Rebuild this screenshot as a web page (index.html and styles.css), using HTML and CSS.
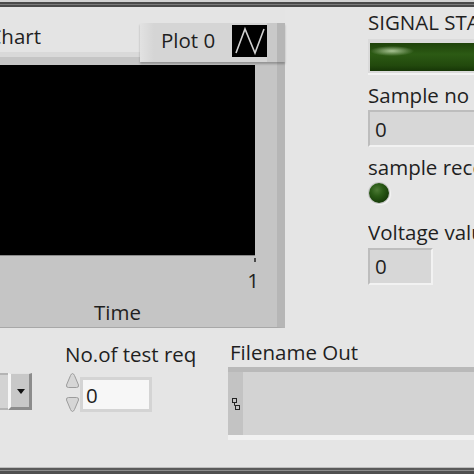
FILE: index.html
```html
<!DOCTYPE html>
<html lang="en">
<head>
  <meta charset="UTF-8" />
  <meta name="viewport" content="width=device-width, initial-scale=1.0"/>
  <title>Front Panel</title>
  <link rel="stylesheet" href="styles.css">
</head>
<body>
  <div class="panel">
    <div class="edge top-edge"></div>

    <div class="upper">
      <div class="chart">
        <div class="chart-head">
          <div class="chart-label"><span>Waveform Chart</span></div>
          <div class="legend">
            <span class="legend-name">Plot 0</span>
            <span class="legend-icon">
              <svg width="35" height="32" viewBox="0 0 35 32">
                <polyline points="4,28 13,4 23,28 32,4" fill="none" stroke="#d0d0d0" stroke-width="1.6"/>
              </svg>
            </span>
          </div>
        </div>
        <div class="chart-frame">
          <div class="plot"></div>
          <div class="tick"></div>
          <div class="x-max">1</div>
          <div class="x-name">Time</div>
        </div>
      </div>

      <div class="indicators">
        <div class="label">SIGNAL STATUS</div>
        <div class="bar-frame"><div class="bar-led"></div></div>
        <div class="label gap">Sample no</div>
        <div class="num-ind wide">0</div>
        <div class="label gap">sample received</div>
        <div class="led"></div>
        <div class="label gap-big">Voltage value</div>
        <div class="num-ind short">0</div>
      </div>
    </div>

    <div class="lower">
      <div class="ring">
        <div class="ring-value"></div>
        <div class="ring-btn"><span class="ring-arrow"></span></div>
      </div>

      <div class="num-ctl">
        <div class="label">No.of test req</div>
        <div class="num-row">
          <svg class="spinner" width="15" height="41" viewBox="0 0 15 41">
            <path d="M7.5 1.5 Q8.5 1.5 9.5 3.5 L13.5 13 Q14 15.5 11.5 15.5 L3.5 15.5 Q1 15.5 1.5 13 L5.5 3.5 Q6.5 1.5 7.5 1.5 Z" fill="#d6d6d6" stroke="#9c9c9c" stroke-width="1"/>
            <path d="M7.5 39.5 Q8.5 39.5 9.5 37.5 L13.5 28 Q14 25.5 11.5 25.5 L3.5 25.5 Q1 25.5 1.5 28 L5.5 37.5 Q6.5 39.5 7.5 39.5 Z" fill="#d6d6d6" stroke="#9c9c9c" stroke-width="1"/>
          </svg>
          <div class="num-box">0</div>
        </div>
      </div>

      <div class="path-ctl">
        <div class="label">Filename Out</div>
        <div class="path-box">
          <div class="path-strip">
            <svg width="8" height="13" viewBox="0 0 8 13">
              <rect x="0.5" y="0.5" width="4" height="4" fill="none" stroke="#222" stroke-width="1"/>
              <path d="M2.5 4.5 V7.5 H3.5" fill="none" stroke="#222" stroke-width="1"/>
              <rect x="3.5" y="7.5" width="4" height="4" fill="none" stroke="#222" stroke-width="1"/>
            </svg>
          </div>
          <div class="path-value"></div>
        </div>
      </div>
    </div>

    <div class="edge bottom-edge"></div>
  </div>
</body>
</html>
```

FILE: styles.css
```css
body {
  margin: 0;
  padding: 0;
  background: #e5e5e5;
  font-family: "Open Sans", "Noto Sans", sans-serif;
  font-size: 20.5px;
  color: #1f1f1f;
  overflow: hidden;
}

.panel {
  width: 474px;
  height: 474px;
  display: flex;
  flex-direction: column;
  overflow: hidden;
}

.edge {
  height: 7px;
  flex: none;
}

.top-edge {
  background: linear-gradient(#d2d2d2 0, #d2d2d2 2px, #4a4a4a 2px, #4a4a4a 4px, #7a7a7a 4px, #7a7a7a 5px, #4a4a4a 5px);
}

.bottom-edge {
  background: linear-gradient(#bdbdbd 0, #bdbdbd 1px, #5a5a5a 1px, #5a5a5a 3px, #8c8c8c 3px, #8c8c8c 4px, #505050 4px);
}

.label {
  line-height: 24px;
  white-space: nowrap;
}

/* chart */
.upper {
  display: flex;
  height: 321px;
}

.chart {
  width: 285px;
  flex: none;
  display: flex;
  flex-direction: column;
}

.chart-head {
  height: 50px;
  display: flex;
  align-items: flex-start;
  background: linear-gradient(#e4e4e4 0, #e4e4e4 45px, #d9d9d9 45px);
}

.chart-label {
  width: 41px;
  margin-top: 17px;
  line-height: 24px;
  display: flex;
  justify-content: flex-end;
  overflow: hidden;
  white-space: nowrap;
}

.chart-label span {
  flex: none;
}

.legend {
  position: relative;
  z-index: 1;
  margin-left: auto;
  margin-top: 16px;
  width: 145px;
  height: 39px;
  box-sizing: border-box;
  display: flex;
  align-items: flex-start;
  padding-left: 21px;
  background: linear-gradient(90deg, #e2e2e2 0, #d5d5d5 14px, #d5d5d5 127px, #c9c9c9 127px);
  border-right: 8px solid #b6b6b6;
  box-shadow: 0 2px 2px rgba(0, 0, 0, 0.25);
}

.legend-name {
  margin-top: 5px;
  line-height: 24px;
}

.legend-icon {
  margin-left: auto;
  margin-right: 10px;
  margin-top: 2px;
  width: 35px;
  height: 32px;
  background: #000;
  display: block;
}

.legend-icon svg {
  display: block;
}

.chart-frame {
  height: 271px;
  box-sizing: border-box;
  background: #c5c5c5;
  border-right: 8px solid #b6b6b6;
  border-bottom: 1px solid #a8a8a8;
  display: flex;
  flex-direction: column;
}

.plot {
  margin-top: 8px;
  width: 255px;
  height: 191px;
  background: #000;
  border-bottom: 1px solid #8a8a8a;
  box-sizing: border-box;
}

.tick {
  margin-top: 2px;
  margin-left: 254px;
  width: 2px;
  height: 4px;
  background: #4a4a4a;
}

.x-max {
  margin-top: 6px;
  width: 259px;
  text-align: right;
  line-height: 24px;
}

.x-name {
  margin-top: 8px;
  width: 235px;
  text-align: center;
  line-height: 24px;
}

/* indicators on the right */
.indicators {
  margin-left: 83px;
  flex: 1;
  min-width: 0;
  display: flex;
  flex-direction: column;
  align-items: flex-start;
  padding-top: 3px;
  overflow: hidden;
}

.indicators .gap {
  margin-top: 8px;
}

.indicators .gap-big {
  margin-top: 17px;
}

.bar-frame {
  margin-top: 5px;
  margin-left: -1px;
  width: 120px;
  height: 36px;
  box-sizing: border-box;
  padding: 4px 0 4px 3px;
  background: #dadada;
  border-bottom: 2px solid #f3f3f3;
}

.bar-led {
  height: 28px;
  background:
    radial-gradient(ellipse 22px 5px at 22px 8px, rgba(190, 215, 170, 0.85), rgba(190, 215, 170, 0) 100%),
    linear-gradient(#1e4209, #2c5a14 40%, #22490d 80%, #173607);
}

.num-ind {
  margin-top: 3px;
  height: 37px;
  box-sizing: border-box;
  padding-left: 5px;
  display: flex;
  align-items: center;
  background: #d7d7d7;
  border: 2px solid;
  border-color: #bdbdbd #f2f2f2 #f2f2f2 #bdbdbd;
  line-height: 24px;
}

.num-ind.wide {
  width: 120px;
}

.num-ind.short {
  width: 65px;
  margin-top: 4px;
}

.led {
  margin-top: 3.5px;
  margin-left: 1px;
  width: 20px;
  height: 20px;
  border-radius: 50%;
  background: radial-gradient(circle at 40% 35%, #4d7a35 0, #2a5a16 35%, #163a08 75%, #0e2a04 100%);
  box-shadow: 0 0 0 1px #c8c8c8, 1px 1px 1px 1px #f5f5f5;
}

/* bottom row */
.lower {
  height: 139px;
  display: flex;
  align-items: flex-start;
}

.ring {
  margin-top: 45px;
  width: 32px;
  height: 37px;
  flex: none;
  display: flex;
}

.ring-value {
  width: 8px;
  background: #d3d3d3;
  border-top: 2px solid #b4b4b4;
  border-bottom: 2px solid #b4b4b4;
}

.ring-btn {
  flex: 1;
  box-sizing: border-box;
  background: #c8c8c8;
  border-left: 3px solid #f6f6f6;
  border-top: 1px solid #e2e2e2;
  border-right: 3px solid #8c8c8c;
  border-bottom: 3px solid #8c8c8c;
  display: flex;
  align-items: center;
  justify-content: center;
}

.ring-arrow {
  width: 0;
  height: 0;
  margin-left: 1px;
  margin-top: 1px;
  border-left: 4px solid transparent;
  border-right: 4px solid transparent;
  border-top: 5px solid #111;
}

.num-ctl {
  width: 87px;
  flex: none;
  margin-left: 33px;
  margin-top: 14px;
  display: flex;
  flex-direction: column;
}

.num-row {
  margin-top: 6px;
  display: flex;
  align-items: flex-start;
}

.spinner {
  display: block;
  flex: none;
}

.num-box {
  margin-top: 5px;
  width: 72px;
  height: 35px;
  box-sizing: border-box;
  padding-left: 3px;
  display: flex;
  align-items: center;
  background: #f7f7f7;
  border: 3px solid #d4d4d4;
  line-height: 24px;
}

.path-ctl {
  margin-left: 76px;
  margin-top: 12px;
  flex: 1;
  display: flex;
  flex-direction: column;
}

.path-ctl .label {
  padding-left: 2px;
}

.path-box {
  margin-top: 3px;
  height: 73px;
  box-sizing: border-box;
  display: flex;
  border-top: 5px solid #b9b9b9;
  border-bottom: 5px solid #f1f1f1;
  background: #d3d3d3;
}

.path-strip {
  width: 15px;
  background: #c3c3c3;
  display: flex;
  align-items: center;
  justify-content: center;
}

.path-strip svg {
  display: block;
  margin-top: 2px;
}

.path-value {
  flex: 1;
}
```
